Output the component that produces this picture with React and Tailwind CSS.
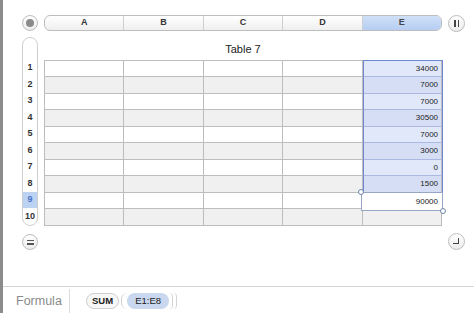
import React from "react";

const cols = ["A", "B", "C", "D", "E"];
const eVals = ["34000", "7000", "7000", "30500", "7000", "3000", "0", "1500", "90000", ""];
const rowH = [16, 17, 16, 17, 16, 17, 16, 17, 16, 17];

export default function App() {
  return (
    <div
      className="w-[474px] h-[313px] flex bg-white overflow-hidden"
      style={{ fontFamily: '"Liberation Sans", Arial, sans-serif' }}
    >
      <div className="w-[3px] h-full bg-[#8c8c8c]" />
      <div className="flex-1 flex flex-col">
        <div className="flex-1 flex pt-[15px] pl-[19px]">
          {/* left column */}
          <div className="w-[16px] flex flex-col">
            <div className="w-[16px] h-[16px] rounded-full border border-[#bdbdbd] bg-gradient-to-b from-white to-[#ececec] flex items-center justify-center">
              <div className="w-[8px] h-[8px] rounded-full bg-[#8a8a8a]" />
            </div>
            <div className="mt-[6px] w-[16px] border border-[#cfcfcf] rounded-t-[8px] rounded-b-[8px] bg-white flex flex-col overflow-hidden">
              <div className="h-[22px]" />
              {rowH.map((h, i) => (
                <div
                  key={i}
                  className={`flex items-center justify-center text-[9px] font-bold ${i === 8 ? "bg-[#bcd2f3] text-[#4a74c9]" : "text-[#333]"}`}
                  style={{ height: h }}
                >
                  {i + 1}
                </div>
              ))}
            </div>
            <div className="mt-[8px] w-[16px] h-[16px] rounded-full border border-[#bdbdbd] bg-gradient-to-b from-white to-[#ececec] flex flex-col items-center justify-center gap-[2px]">
              <div className="w-[7px] h-[1.5px] bg-[#555]" />
              <div className="w-[7px] h-[1.5px] bg-[#555]" />
            </div>
          </div>

          {/* middle */}
          <div className="ml-[6px] w-[398px] flex flex-col">
            <div className="h-[16px] flex border border-[#bdbdbd] rounded-[6px] overflow-hidden bg-gradient-to-b from-white to-[#efefef]">
              {cols.map((c, i) => (
                <div
                  key={c}
                  className={`flex-1 flex items-center justify-center text-[9px] font-bold ${i > 0 ? "border-l border-[#cfcfcf]" : ""} ${c === "E" ? "bg-gradient-to-b from-[#cfe0f8] to-[#b6cef2] border-[#8eaadb] text-[#444]" : "text-[#333]"}`}
                >
                  {c}
                </div>
              ))}
            </div>
            <div className="h-[29px] flex items-end justify-center pb-[3px] text-[11px] text-[#222]">
              Table 7
            </div>
            <div className="relative border-t border-l border-[#bdbdbd]">
              {rowH.map((h, r) => (
                <div key={r} className={`flex ${r % 2 === 1 ? "bg-[#f0f0f0]" : "bg-white"}`} style={{ height: h }}>
                  {cols.map((c, ci) => {
                    const isE = ci === 4;
                    let cls = "flex-1 border-r border-b border-[#bdbdbd] flex items-center justify-end pr-[3px] text-[8px] text-[#222]";
                    if (isE && r < 8) {
                      cls += r % 2 === 1 ? " bg-[#d5def5] border-b-[#aab8e2]" : " bg-[#e1e8fa] border-b-[#aab8e2]";
                    }
                    return (
                      <div key={c} className={cls}>
                        {isE ? eVals[r] : ""}
                      </div>
                    );
                  })}
                </div>
              ))}
              {/* selection outline E1:E8 */}
              <div className="absolute left-[318px] top-[-1px] w-[80px] h-[133px] border border-[#6f86d2] pointer-events-none" />
              {/* active cell E9 */}
              <div className="absolute left-[316px] top-[131px] w-[82px] h-[19px] border border-[#97a6c6] bg-white flex items-center justify-end pr-[4px] text-[8px] text-[#222]">
                90000
              </div>
              <div className="absolute left-[313px] top-[128px] w-[6px] h-[6px] rounded-full border border-[#6f86a8] bg-white" />
              <div className="absolute left-[395px] top-[147px] w-[6px] h-[6px] rounded-full border border-[#6f86a8] bg-white" />
            </div>
          </div>

          {/* right column */}
          <div className="ml-[6px] w-[17px] flex flex-col">
            <div className="w-[17px] h-[17px] rounded-full border border-[#bdbdbd] bg-gradient-to-b from-white to-[#ececec] flex items-center justify-center gap-[2px]">
              <div className="w-[1.5px] h-[7px] bg-[#444]" />
              <div className="w-[1.5px] h-[7px] bg-[#444]" />
            </div>
            <div className="mt-[201px] w-[17px] h-[17px] rounded-full border border-[#bdbdbd] bg-gradient-to-b from-white to-[#ececec] flex items-center justify-center">
              <div className="w-[6px] h-[6px] border-r-[1.5px] border-b-[1.5px] border-[#444] -mt-[2px] -ml-[2px]" />
            </div>
          </div>
        </div>

        {/* formula bar */}
        <div className="h-[27px] border-t border-[#d6d6d6] flex items-center bg-white pt-[2px]">
          <div className="w-[67px] h-full border-r border-[#dcdcdc] flex items-center pl-[13px] text-[12.5px] text-[#8a8a8a]">
            Formula
          </div>
          <div className="flex items-center pl-[16px] h-full">
            <div className="h-[16px] px-[5px] rounded-full border border-[#cfcfcf] bg-[#f7f7f7] flex items-center text-[9.5px] font-bold text-[#222]">
              SUM
            </div>
            <div className="h-[16px] w-[6px] ml-[2px] rounded-l-full border-l border-[#cfcfcf]" />
            <div className="h-[16px] px-[8px] rounded-full bg-[#c9d7ef] flex items-center text-[9.5px] text-[#222]">
              E1:E8
            </div>
            <div className="h-[16px] w-[4px] rounded-r-full border-r border-[#d4d4d4]" />
            <div className="h-[16px] w-[4px] rounded-r-full border-r border-[#d4d4d4]" />
          </div>
        </div>
      </div>
    </div>
  );
}
